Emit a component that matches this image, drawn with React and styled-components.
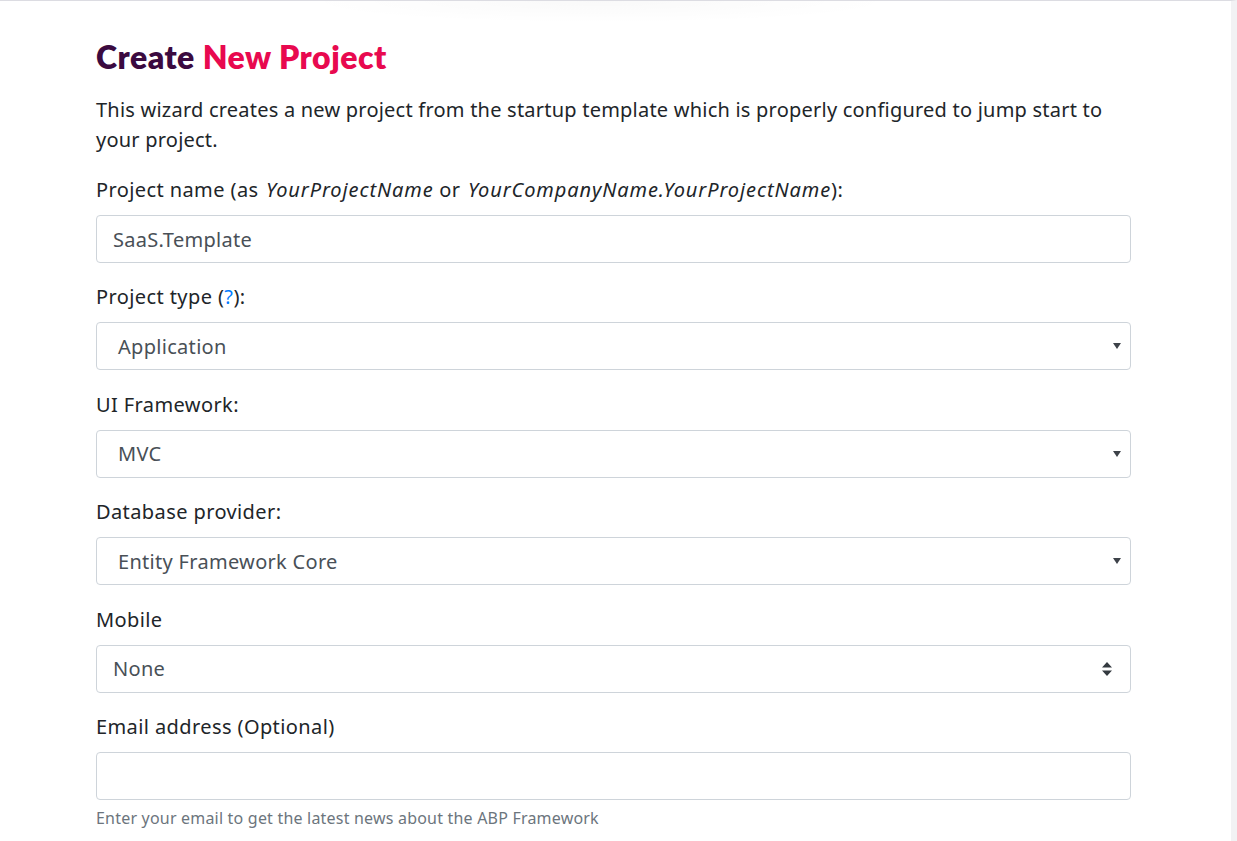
import styled, { createGlobalStyle } from "styled-components";

const GlobalStyle = createGlobalStyle`
  html, body {
    margin: 0;
    padding: 0;
    background: #fff;
  }
  body {
    font-family: "Noto Sans", "Open Sans", sans-serif;
    color: #212529;
  }
`;

const Page = styled.div`
  min-height: 841px;
  box-sizing: border-box;
  border-top: 1px solid #dcdce2;
  border-right: 6px solid #f2f2f4;
  background: radial-gradient(
    ellipse 300px 22px at 600px 0,
    rgba(0, 0, 0, 0.025),
    rgba(0, 0, 0, 0)
  );
`;

const Container = styled.div`
  width: 1035px;
  padding: 36px 0 0 96px;
`;

const Title = styled.h1`
  margin: 0 0 18px;
  font-family: "Lato", sans-serif;
  font-weight: 800;
  font-size: 32px;
  line-height: 40px;
  letter-spacing: 0.5px;
  color: #3b0a40;
  span {
    color: #e8094f;
  }
`;

const Lead = styled.p`
  margin: 0 0 20px;
  font-size: 20px;
  line-height: 30px;
  letter-spacing: 0.22px;
`;

const Group = styled.div`
  margin-bottom: 19.4px;
`;

const Label = styled.label`
  display: block;
  font-size: 20px;
  line-height: 30px;
  letter-spacing: 0.4px;
  margin-bottom: 10px;
  em {
    font-style: italic;
    letter-spacing: 0.9px;
    padding-left: 2px;
  }
  a {
    color: #007bff;
    text-decoration: none;
  }
`;

const Input = styled.input`
  display: block;
  width: 100%;
  height: 48px;
  box-sizing: border-box;
  padding: 0 16px;
  border: 1px solid #ced4da;
  border-radius: 4px;
  font-family: inherit;
  font-size: 20px;
  letter-spacing: 0.3px;
  color: #495057;
  background: #fff;
  outline: none;
`;

const SelectBox = styled.div`
  display: flex;
  align-items: center;
  justify-content: space-between;
  height: 48px;
  box-sizing: border-box;
  padding: 0 ${(p) => (p.$custom ? "18px" : "9px")} 0
    ${(p) => (p.$custom ? "16px" : "21px")};
  border: 1px solid #ced4da;
  border-radius: 4px;
  font-size: 20px;
  letter-spacing: 0.3px;
  color: #495057;
  background: #fff;
`;

const Help = styled.small`
  display: block;
  margin-top: 6px;
  font-size: 16px;
  line-height: 24px;
  letter-spacing: 0.2px;
  color: #6c757d;
`;

const Caret = () => (
  <svg width="8" height="6" viewBox="0 0 8 6">
    <path d="M0 0h8L4 6z" fill="#3d4249" />
  </svg>
);

const UpDown = () => (
  <svg width="10" height="14" viewBox="0 0 10 14">
    <path d="M5 0l5 5.5H0zM5 14L0 8.5h10z" fill="#343a40" />
  </svg>
);

const Select = ({ value, custom }) => (
  <SelectBox $custom={custom}>
    <span>{value}</span>
    {custom ? <UpDown /> : <Caret />}
  </SelectBox>
);

export default function App() {
  return (
    <Page>
      <GlobalStyle />
      <Container>
        <Title>
          Create <span>New Project</span>
        </Title>
        <Lead>
          This wizard creates a new project from the startup template which is
          properly configured to jump start to your project.
        </Lead>
        <Group>
          <Label>
            Project name (as <em>YourProjectName</em> or{" "}
            <em>YourCompanyName.YourProjectName</em>):
          </Label>
          <Input defaultValue="SaaS.Template" />
        </Group>
        <Group>
          <Label>
            Project type (<a href="#">?</a>):
          </Label>
          <Select value="Application" />
        </Group>
        <Group>
          <Label>UI Framework:</Label>
          <Select value="MVC" />
        </Group>
        <Group>
          <Label>Database provider:</Label>
          <Select value="Entity Framework Core" />
        </Group>
        <Group>
          <Label>Mobile</Label>
          <Select value="None" custom />
        </Group>
        <Group>
          <Label>Email address (Optional)</Label>
          <Input />
          <Help>Enter your email to get the latest news about the ABP Framework</Help>
        </Group>
      </Container>
    </Page>
  );
}
